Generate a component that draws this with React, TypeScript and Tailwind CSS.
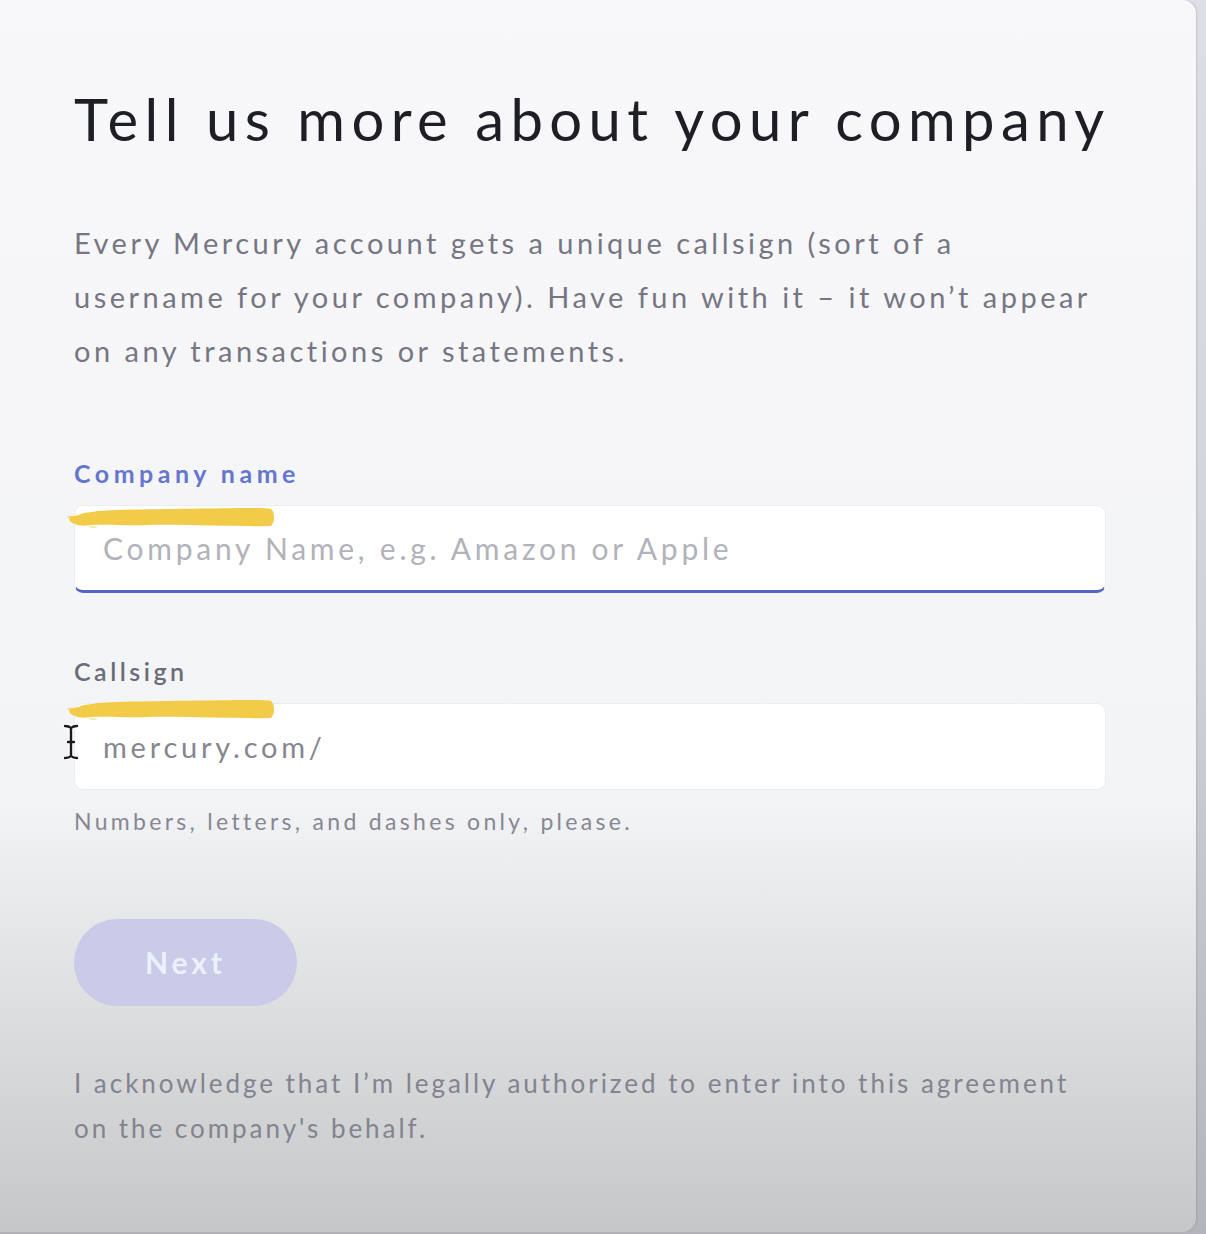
import React from "react";

const font = { fontFamily: '"Lato", "Liberation Sans", sans-serif' };

const BrushStroke: React.FC<{ className?: string }> = ({ className }) => (
  <svg
    className={className}
    viewBox="0 0 210 22"
    width="210"
    height="22"
    aria-hidden="true"
  >
    <path
      d="M2 12 C6 8 10 9 14 7 C18 5 24 6 30 4 C60 2 120 2 170 1 C185 1 200 1 204 2 C208 5 208 15 204 19 C170 20 120 17 80 18 C60 19 40 17 24 18 C18 19 12 19 8 17 C5 16 3 15 2 12 Z"
      fill="#f2cc48"
    />
    <path d="M0 10 C3 8 7 9 9 10 C6 12 3 12 0 10 Z" fill="#f2cc48" opacity="0.8" />
    <path d="M20 19 L32 20 L26 21 Z" fill="#f2cc48" opacity="0.7" />
  </svg>
);

const IBeam: React.FC<{ className?: string }> = ({ className }) => (
  <svg className={className} viewBox="0 0 18 38" width="18" height="38" aria-hidden="true">
    <path
      d="M3 3 C6 3 8 4 9 5 C10 4 12 3 15 3 M9 5 L9 33 M3 35 C6 35 8 34 9 33 C10 34 12 35 15 35 M6 19 L12 19"
      stroke="#ffffff"
      strokeWidth="4.5"
      fill="none"
      strokeLinecap="round"
    />
    <path
      d="M3 3 C6 3 8 4 9 5 C10 4 12 3 15 3 M9 5 L9 33 M3 35 C6 35 8 34 9 33 C10 34 12 35 15 35 M6 19 L12 19"
      stroke="#1b1b1f"
      strokeWidth="2.4"
      fill="none"
      strokeLinecap="round"
    />
  </svg>
);

export default function App() {
  return (
    <div
      className="w-[1206px] h-[1234px] flex bg-linear-to-b from-[#dedee6] via-[#d2d2da] to-[#b4b4bc] overflow-hidden"
      style={font}
    >
      <div className="w-[1196px] h-[1232px] rounded-r-[14px] bg-linear-to-b from-[#f8f8fb] via-[#f3f4f6] via-65% to-[#c6c7c9] shadow-[1px_0_2px_rgba(0,0,0,0.12)] pl-[74px] pr-[60px] pt-[90px]">
        <h1 className="text-[58px] leading-none tracking-[0.11em] text-[#1e1e26] font-normal whitespace-nowrap">
          Tell us more about your company
        </h1>

        <p className="mt-[68px] text-[29px] leading-[54px] tracking-[0.12em] text-[#767683] whitespace-nowrap">
          Every Mercury account gets a unique callsign (sort of a
          <br />
          username for your company). Have fun with it – it won’t appear
          <br />
          on any transactions or statements.
        </p>

        <label className="block mt-[79px] text-[25px] leading-[32px] font-bold tracking-[0.18em] text-[#6676cf]">
          Company name
        </label>
        <div className="relative mt-[16px]">
          <div className="h-[88px] w-[1032px] rounded-[9px] bg-white border border-[#ececf2] border-b-[3px] border-b-[#5664c4] flex items-center pl-[28px]">
            <span className="text-[30px] tracking-[0.125em] text-[#b2b2ba]">
              Company Name, e.g. Amazon or Apple
            </span>
          </div>
          <BrushStroke className="absolute -left-[7px] top-[2px]" />
        </div>

        <label className="block mt-[62px] text-[25px] leading-[32px] font-semibold tracking-[0.14em] text-[#6c6c78]">
          Callsign
        </label>
        <div className="relative mt-[16px]">
          <div className="h-[87px] w-[1032px] rounded-[9px] bg-white border border-[#ececf2] flex items-center pl-[28px]">
            <span className="text-[29px] tracking-[0.13em] text-[#86868f]">
              mercury.com/
            </span>
          </div>
          <BrushStroke className="absolute -left-[7px] -top-[4px]" />
          <IBeam className="absolute -left-[12px] top-[20px]" />
        </div>

        <p className="mt-[16px] text-[23px] leading-[30px] tracking-[0.144em] text-[#878793]">
          Numbers, letters, and dashes only, please.
        </p>

        <button className="mt-[83px] h-[87px] w-[223px] rounded-full bg-[#c9cbe8] text-[30px] font-bold tracking-[0.13em] text-[#eef0fb]">
          Next
        </button>

        <p className="mt-[55px] text-[26px] leading-[45px] tracking-[0.114em] text-[#83838f] whitespace-nowrap">
          I acknowledge that I’m legally authorized to enter into this agreement
          <br />
          on the company's behalf.
        </p>
      </div>
    </div>
  );
}
